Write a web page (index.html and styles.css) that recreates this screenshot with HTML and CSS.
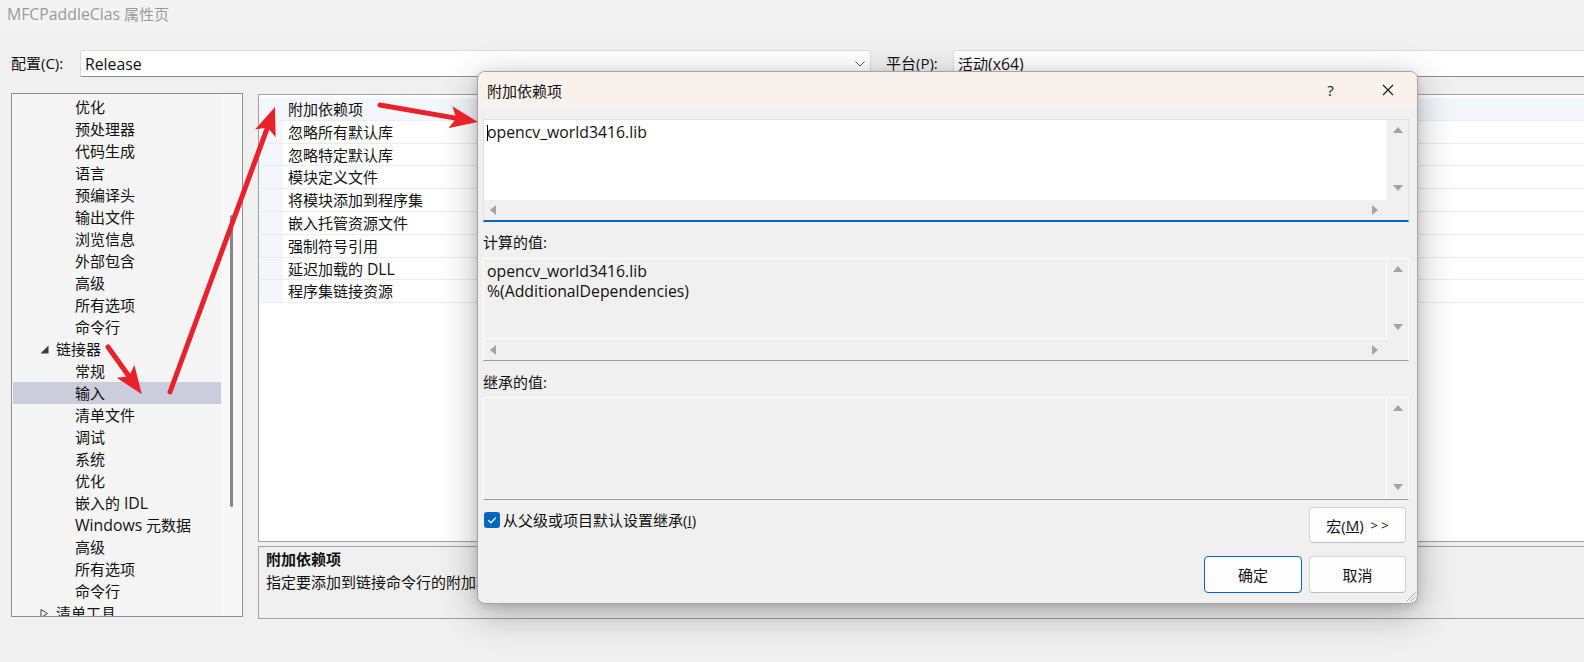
FILE: index.html
```html
<!DOCTYPE html>
<html lang="zh-CN">
<head>
  <meta charset="UTF-8">
  <title>MFCPaddleClas 属性页</title>
  <link rel="stylesheet" href="styles.css">
</head>
<body>
  <div class="page">
    <div class="caption"><span class="en">MFCPaddleClas</span> 属性页</div>

    <div class="config-row">
      <span class="config-label">配置(C):</span>
      <div class="combo combo-config">
        <span class="en">Release</span>
        <svg class="chevron" viewBox="0 0 10 6"><path d="M0.5 0.5 L5 5 L9.5 0.5"/></svg>
      </div>
      <span class="config-label platform-label">平台(P):</span>
      <div class="combo combo-platform"><span>活动<span class="en">(x64)</span></span></div>
    </div>

    <div class="main">
      <div class="tree">
        <ul class="tree-list">
          <li>优化</li>
          <li>预处理器</li>
          <li>代码生成</li>
          <li>语言</li>
          <li>预编译头</li>
          <li>输出文件</li>
          <li>浏览信息</li>
          <li>外部包含</li>
          <li>高级</li>
          <li>所有选项</li>
          <li>命令行</li>
          <li class="node"><svg viewBox="0 0 9 9"><polygon class="open" points="8.5,0.5 8.5,8.5 0.5,8.5"/></svg>链接器</li>
          <li>常规</li>
          <li class="selected">输入</li>
          <li>清单文件</li>
          <li>调试</li>
          <li>系统</li>
          <li>优化</li>
          <li>嵌入的&nbsp;<span class="en">IDL</span></li>
          <li><span class="en">Windows</span>&nbsp;元数据</li>
          <li>高级</li>
          <li>所有选项</li>
          <li>命令行</li>
          <li class="node"><svg viewBox="0 0 9 9"><polygon class="closed" points="1,0.5 7.5,4.5 1,8.5"/></svg>清单工具</li>
        </ul>
        <div class="tree-scroll"><div class="thumb"></div></div>
      </div>

      <div class="props">
        <div class="grid">
          <div class="row active"><span class="gutter"></span><span class="name">附加依赖项</span></div>
          <div class="row"><span class="gutter"></span><span class="name">忽略所有默认库</span></div>
          <div class="row"><span class="gutter"></span><span class="name">忽略特定默认库</span></div>
          <div class="row"><span class="gutter"></span><span class="name">模块定义文件</span></div>
          <div class="row"><span class="gutter"></span><span class="name">将模块添加到程序集</span></div>
          <div class="row"><span class="gutter"></span><span class="name">嵌入托管资源文件</span></div>
          <div class="row"><span class="gutter"></span><span class="name">强制符号引用</span></div>
          <div class="row"><span class="gutter"></span><span class="name">延迟加载的 <span class="en">DLL</span></span></div>
          <div class="row"><span class="gutter"></span><span class="name">程序集链接资源</span></div>
        </div>
        <div class="desc">
          <div class="desc-title">附加依赖项</div>
          <div class="desc-text">指定要添加到链接命令行的附加项。[例如 kernel32.lib]</div>
        </div>
      </div>
    </div>

    <div class="dialog">
      <div class="dlg-header">
        <span class="dlg-title">附加依赖项</span>
        <span class="dlg-help">?</span>
        <span class="dlg-close">
          <svg viewBox="0 0 12 12"><path d="M1 1 L11 11 M11 1 L1 11"/></svg>
        </span>
      </div>

      <div class="dlg-body">
        <div class="edit">
          <div class="edit-text en"><span class="caret"></span>opencv_world3416.lib</div>
          <div class="vscroll"><i class="arr up"></i><i class="arr down"></i></div>
          <div class="hscroll"><i class="arr left"></i><i class="arr right"></i></div>
          <div class="corner"></div>
        </div>

        <div class="field-label">计算的值:</div>
        <div class="edit readonly">
          <div class="edit-text en">opencv_world3416.lib<br>%(AdditionalDependencies)</div>
          <div class="vscroll"><i class="arr up"></i><i class="arr down"></i></div>
          <div class="hscroll"><i class="arr left"></i><i class="arr right"></i></div>
          <div class="corner"></div>
        </div>

        <div class="field-label inherit-label">继承的值:</div>
        <div class="edit readonly no-h">
          <div class="edit-text"></div>
          <div class="vscroll"><i class="arr up"></i><i class="arr down"></i></div>
        </div>

        <div class="footer">
          <div class="footer-row first">
            <label class="check">
              <svg viewBox="0 0 16 16"><rect x="0" y="0" width="16" height="16" rx="3"/><path d="M4.3 8.2 L6.9 10.8 L11.8 5.6"/></svg>
              <span>从父级或项目默认设置继承(<u>I</u>)</span>
            </label>
            <button class="btn">宏(<u>M</u>)<span class="gt">&gt; &gt;</span></button>
          </div>
          <div class="footer-row second">
            <button class="btn default">确定</button>
            <button class="btn">取消</button>
          </div>
        </div>
      </div>

      <svg class="grip" viewBox="0 0 11 11"><path d="M10.5 1.5 L1.5 10.5 M10.5 5.5 L5.5 10.5"/></svg>
    </div>

    <svg class="arrows" viewBox="0 0 1584 662">
      <defs>
        <marker id="head" markerUnits="userSpaceOnUse" markerWidth="28" markerHeight="22" refX="17" refY="11" orient="auto">
          <path d="M0 0 L28 11 L0 22 L6 11 Z"/>
        </marker>
      </defs>
      <line x1="108" y1="347" x2="135.4" y2="385.2" marker-end="url(#head)"/>
      <line x1="170" y1="392" x2="271.2" y2="117.3" marker-end="url(#head)"/>
      <line x1="380" y1="105" x2="467.2" y2="120.1" marker-end="url(#head)"/>
    </svg>
  </div>
</body>
</html>
```

FILE: styles.css
```css
* {
  margin: 0;
  padding: 0;
  box-sizing: border-box;
}

body {
  width: 1584px;
  height: 662px;
  overflow: hidden;
  background: #f0f0f0;
  font-family: "Open Sans", "Noto Sans CJK SC", sans-serif;
  font-size: 15px;
  color: #111;
}

.page {
  position: relative;
  width: 1584px;
  height: 662px;
  overflow: hidden;
}

/* latin runs are set a touch larger so they match the UI font widths */
.en {
  font-size: 15.8px;
}

.caption {
  height: 32px;
  background: #f3f3f3;
  padding-left: 7px;
  line-height: 28px;
  color: #9b9b9b;
}

/* config / platform row */
.config-row {
  display: flex;
  align-items: center;
  height: 27px;
  margin-top: 18px;
  padding-left: 11px;
}

.config-label {
  width: 69px;
  line-height: 27px;
}

.platform-label {
  width: 67px;
  margin-left: 15px;
}

.combo {
  height: 27px;
  background: #fff;
  border: 1px solid #dcdcdc;
  border-bottom-color: #8d8d8d;
  border-radius: 3px 3px 0 0;
  display: flex;
  align-items: center;
  padding-left: 4px;
}

.combo-config {
  width: 791px;
  justify-content: space-between;
  padding-right: 5px;
}

.combo-platform {
  flex: 1;
  margin-right: -6px;
}

.chevron {
  width: 10px;
  height: 6px;
  fill: none;
  stroke: #5a5a5a;
  stroke-width: 1;
}

/* tree + property grid */
.main {
  display: flex;
  margin-top: 16px;
}

.tree {
  width: 232px;
  height: 524px;
  margin-left: 11px;
  border: 1px solid #8f8f8f;
  background: #f5f5f5;
  display: flex;
}

.tree-list {
  list-style: none;
  flex: 1;
  padding: 2px 1px 0;
  overflow: hidden;
}

.tree-list li {
  height: 22px;
  line-height: 22px;
  padding-left: 62px;
  white-space: nowrap;
  display: flex;
  align-items: center;
}

.tree-list .node {
  padding-left: 27px;
}

.tree-list .node svg {
  width: 9px;
  height: 9px;
  margin-right: 7px;
}

.tree-list .open {
  fill: #3c3c3c;
}

.tree-list .closed {
  fill: none;
  stroke: #3c3c3c;
  stroke-width: 1;
}

.tree-list .selected {
  background: #cbccdc;
}

.tree-scroll {
  width: 20px;
  background: #f7f7f7;
  border-left: 1px solid #fdfdfd;
}

.thumb {
  width: 3px;
  height: 292px;
  margin: 121px 0 0 7px;
  background: #868686;
  border-radius: 2px;
}

.props {
  flex: 1;
  margin-left: 15px;
  margin-right: -3px;
  padding-top: 1px;
}

.grid {
  height: 448px;
  background: #fff;
  border: 1px solid #a0a0a0;
  padding-top: 3px;
}

.row {
  height: 22.8px;
  display: flex;
  border-bottom: 1px solid #e9ecf2;
  line-height: 22px;
}

.row.active {
  background: #f3f6fb;
}

.gutter {
  width: 24px;
  background: #f3f6fb;
}

.name {
  padding-left: 5px;
  white-space: nowrap;
}

.desc {
  height: 73px;
  margin-top: 4px;
  border: 1px solid #a0a0a0;
  padding: 1px 7px;
  white-space: nowrap;
}

.desc-title {
  font-weight: bold;
  line-height: 23px;
}

.desc-text {
  line-height: 23px;
}

/* dialog window */
.dialog {
  position: absolute;
  left: 477px;
  top: 71px;
  width: 941px;
  height: 533px;
  background: #f0f0f0;
  border: 1px solid #a5a5a5;
  border-radius: 8px;
  overflow: hidden;
  box-shadow: 0 10px 36px rgba(0, 0, 0, 0.3), 0 2px 8px rgba(0, 0, 0, 0.12);
  display: flex;
  flex-direction: column;
  z-index: 5;
}

.dlg-header {
  height: 36px;
  flex-shrink: 0;
  background: #f9f1ec;
  display: flex;
  align-items: center;
}

.dlg-title {
  flex: 1;
  padding-left: 9px;
}

.dlg-help {
  width: 57px;
  text-align: center;
}

.dlg-close {
  width: 58px;
  display: flex;
  justify-content: center;
}

.dlg-close svg {
  width: 12px;
  height: 12px;
  fill: none;
  stroke: #1a1a1a;
  stroke-width: 1.1;
}

.dlg-body {
  padding: 11px 8px 0 5px;
  display: flex;
  flex-direction: column;
}

.edit {
  height: 103px;
  display: grid;
  grid-template-columns: 1fr 21px;
  grid-template-rows: 1fr 20px;
  border: 1px solid #e1e1e1;
  border-bottom: 2px solid #0067c0;
  background: #f0f0f0;
}

.edit-text {
  background: #fff;
  padding: 1px 3px 0;
  line-height: 22px;
  white-space: nowrap;
  overflow: hidden;
}

.caret {
  display: inline-block;
  width: 1px;
  height: 16px;
  margin-right: -1px;
  background: #000;
  vertical-align: -3px;
}

.vscroll {
  display: flex;
  flex-direction: column;
  justify-content: space-between;
  align-items: center;
  padding: 7px 0 9px;
}

.hscroll {
  display: flex;
  justify-content: space-between;
  align-items: center;
  padding: 0 9px 0 6px;
}

.arr {
  display: block;
  width: 0;
  height: 0;
  border: 0 solid transparent;
}

.arr.up {
  border-width: 0 5px 6px;
  border-bottom-color: #a3a3a3;
}

.arr.down {
  border-width: 6px 5px 0;
  border-top-color: #a3a3a3;
}

.arr.left {
  border-width: 5px 6px 5px 0;
  border-right-color: #a3a3a3;
}

.arr.right {
  border-width: 5px 0 5px 6px;
  border-left-color: #a3a3a3;
}

.edit.readonly {
  grid-template-rows: 1fr 21px;
  border: 1px solid #fbfbfb;
  border-bottom: 1px solid #9c9c9c;
}

.edit.readonly .edit-text {
  background: #f0f0f0;
  border-right: 1px solid #fbfbfb;
  border-bottom: 1px solid #fbfbfb;
  padding-top: 2px;
  line-height: 20px;
}

.edit.readonly.no-h {
  grid-template-rows: 1fr;
}

.edit.readonly.no-h .edit-text {
  border-bottom: 0;
}

.field-label {
  line-height: 22px;
  margin: 9px 0 5px;
}

.inherit-label {
  margin: 10px 0 4px;
}

.footer {
  margin-top: 7px;
  padding-right: 3px;
}

.footer-row {
  display: flex;
  justify-content: flex-end;
  gap: 7px;
}

.footer-row.first {
  justify-content: space-between;
  align-items: flex-start;
}

.footer-row.second {
  margin-top: 13px;
}

.check {
  display: flex;
  align-items: center;
  margin-top: 5px;
  padding-left: 1px;
  line-height: 16px;
}

.check svg {
  width: 16px;
  height: 16px;
  margin-right: 3px;
}

.check rect {
  fill: #0067c0;
}

.check path {
  fill: none;
  stroke: #fff;
  stroke-width: 1.3;
}

.btn {
  width: 97px;
  height: 36px;
  background: #fdfdfd;
  border: 1px solid #d3d3d3;
  border-bottom-color: #bfbfbf;
  border-radius: 4px;
  display: flex;
  justify-content: center;
  align-items: center;
  font: inherit;
  color: inherit;
}

.footer-row.second .btn {
  height: 37px;
}

.btn.default {
  width: 98px;
  border: 1px solid #0067c0;
}

.gt {
  margin-left: 7px;
  font-size: 13px;
}

.grip {
  position: absolute;
  right: 1px;
  bottom: 1px;
  width: 11px;
  height: 11px;
  fill: none;
  stroke: #a8a8a8;
  stroke-width: 1;
}

/* annotation arrows */
.arrows {
  position: absolute;
  left: 0;
  top: 0;
  width: 1584px;
  height: 662px;
  pointer-events: none;
  z-index: 10;
}

.arrows line {
  stroke: #e8212b;
  stroke-width: 5;
  stroke-linecap: round;
}

.arrows marker path {
  fill: #e8212b;
}
```
